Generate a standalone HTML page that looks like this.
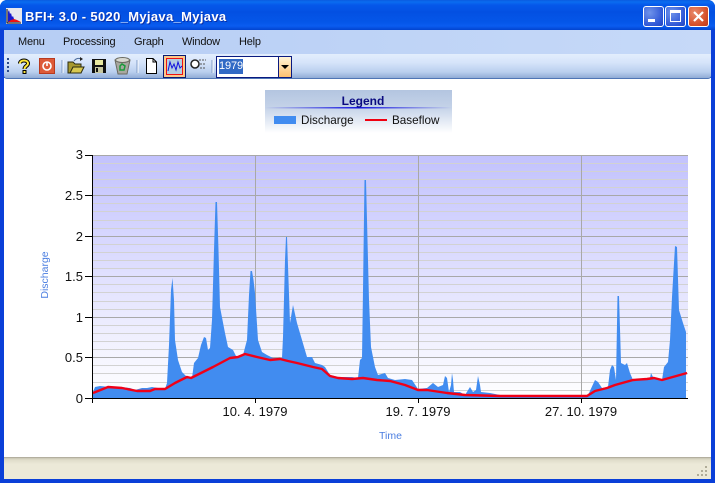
<!DOCTYPE html>
<html><head><meta charset="utf-8"><style>
html,body{margin:0;padding:0;background:#fff;width:715px;height:483px;overflow:hidden}
body{position:relative;font-family:"Liberation Sans",sans-serif}
.a{position:absolute}
.m{position:absolute;top:36px;font-size:11px;color:#111;letter-spacing:-.2px;line-height:13px}
.btn{position:absolute;top:6px;width:19px;height:19px;border:1px solid #fff;border-radius:3px;background:radial-gradient(circle at 30% 30%,#6f93ea,#2f57d6 70%,#2146c0)}
</style></head><body>
<div class="a" style="left:0;top:0;width:715px;height:483px;background:#0a3fd8;border-radius:7px 7px 0 0"></div>
<div class="a" style="left:0;top:0;width:715px;height:30px;border-radius:7px 7px 0 0;background:linear-gradient(#0a5be0 0,#0a6cf0 2px,#0558ea 5px,#0350e2 12px,#0456e8 22px,#0a5cf0 26px,#0244cf 30px)"></div>
<div class="a" style="left:4px;top:78px;width:707px;height:380px;background:#fff"></div>
<svg class="a" style="left:6px;top:8px" width="16" height="16" viewBox="0 0 16 16"><rect width="16" height="16" fill="#e8e8ee"/><path d="M1 1V15H15" stroke="#000" fill="none"/><path d="M2 14V4L3 2 4 6 5 5 6 9 7 8 8 11V14Z" fill="#1a1acc"/><path d="M2 14 5 12 8 11 11 12 15 14Z" fill="#f01010"/></svg>
<div class="a" style="left:25px;top:9px;font-size:13px;font-weight:bold;color:#fff;line-height:16px;white-space:nowrap;letter-spacing:.33px;text-shadow:1px 1px 0 #0a2fa8">BFI+ 3.0 - 5020_Myjava_Myjava</div>
<div class="btn" style="left:643px"><div class="a" style="left:4px;top:12px;width:7px;height:3px;background:#fff"></div></div>
<div class="btn" style="left:665px"><div class="a" style="left:4px;top:3px;width:9px;height:8px;border:1px solid #fff;border-top:3px solid #fff"></div></div>
<div class="btn" style="left:688px;background:radial-gradient(circle at 30% 30%,#e98a6c,#d5502a 65%,#c0391a)"><svg class="a" style="left:3px;top:3px" width="13" height="13"><path d="M2 2 11 11M11 2 2 11" stroke="#fff" stroke-width="2.2"/></svg></div>

<div class="a" style="left:4px;top:30px;width:707px;height:24px;background:linear-gradient(90deg,#b6cdf4,#c6d9f8)"></div>
<div class="m" style="left:18px">Menu</div><div class="m" style="left:63px">Processing</div><div class="m" style="left:134px">Graph</div><div class="m" style="left:182px">Window</div><div class="m" style="left:239px">Help</div>

<div class="a" style="left:4px;top:54px;width:707px;height:24px;background:linear-gradient(#e3eefd 0,#d6e4fa 35%,#b9cfee 75%,#91acd6 100%);border-radius:0 0 3px 3px;border-bottom:1px solid #4f75b5"></div>
<svg class="a" style="left:0;top:50px" width="300" height="32" viewBox="0 50 300 32">
<path d="M7 58h2v2h-2zM7 62h2v2h-2zM7 66h2v2h-2zM7 70h2v2h-2z" fill="#2a4a8a"/>
<path d="M62 60V73M137 60V73M212 60V73" stroke="#7f9cc9"/><path d="M63 60V73M138 60V73M213 60V73" stroke="#fff"/>
<!-- help -->
<path d="M20 63.500C20 59.500 28 59.500 28 63.500 28 66 24.500 66 24.500 69" fill="none" stroke="#000" stroke-width="4"/><path d="M20 63.500C20 59.500 28 59.500 28 63.500 28 66 24.500 66 24.500 69" fill="none" stroke="#ffe83a" stroke-width="2"/><rect x="22.500" y="70" width="4" height="4" fill="#000"/><rect x="23.500" y="71" width="2" height="2" fill="#ffe83a"/>
<!-- power -->
<rect x="39.500" y="58.500" width="15" height="15" fill="#dd5a38" stroke="#b83a20"/><circle cx="47" cy="66" r="4" fill="none" stroke="#fff" stroke-width="1.600"/><path d="M47 62V66" stroke="#fff" stroke-width="1.600"/>
<!-- folder -->
<path d="M68 62H73L75 64H81V73H68Z" fill="#a89a30" stroke="#2a2a10"/><path d="M70 73 73 67H84L81 73Z" fill="#d8c850" stroke="#2a2a10"/><path d="M74 61C76 58 79 58 81 59" stroke="#4a6a9a" fill="none"/><path d="M80 57l3 2-3 2z" fill="#222"/>
<!-- floppy -->
<rect x="92" y="59" width="14" height="14" fill="#111"/><rect x="95" y="60" width="8" height="5" fill="#e8e8a0"/><rect x="95" y="67" width="8" height="6" fill="#c8c8a0"/><rect x="96" y="68" width="2" height="4" fill="#111"/>
<!-- recycle -->
<path d="M115 60H130L127 74H118Z" fill="#a8a8a0" stroke="#6a6a60"/><ellipse cx="122.500" cy="60" rx="7" ry="2.500" fill="#d8d8d0" stroke="#6a6a60"/><path d="M120 66 122 64 125 66 124 70H120Z" fill="none" stroke="#1a9a3a" stroke-width="1.500"/>
<!-- new -->
<path d="M146.500 58.500H153L156.500 62V73.500H146.500Z" fill="#fff" stroke="#000"/><path d="M153 58.500V62H156.500" fill="none" stroke="#000"/>
<!-- active -->
<rect x="163.500" y="55.500" width="22" height="22" fill="#fdc88a" stroke="#0a1a70"/><rect x="166.500" y="58.500" width="16" height="16" fill="#b4cde0" stroke="#ee1010" stroke-width="1"/><path d="M168 71 170 62 172 68 174 64 176 70 178 62 180 68 182 66" fill="none" stroke="#1010dd"/>
<!-- options -->
<circle cx="195" cy="64" r="4" fill="#fff" stroke="#222" stroke-width="1.500"/><path d="M199 60H206M200 64H206M200 68H206" stroke="#555" stroke-dasharray="2 1"/>
</svg>
<div class="a" style="left:216px;top:56px;width:74px;height:20px;border:1px solid #0a1a80;background:#fff"></div>
<div class="a" style="left:219px;top:59px;width:24px;height:15px;background:#316ac5;color:#fff;font-size:11px;line-height:15px;text-align:center;letter-spacing:-.1px">1979</div>
<div class="a" style="left:278px;top:57px;width:12px;height:20px;border-left:1px solid #0a1a80;background:linear-gradient(#fff4d8,#fdc070)"></div>
<div class="a" style="left:281px;top:65px;width:0;height:0;border-left:4px solid transparent;border-right:4px solid transparent;border-top:4px solid #000"></div>

<div class="a" style="left:4px;top:457px;width:707px;height:22px;background:linear-gradient(#9e9a8a 0,#c8c5b4 1px,#e0ddca 3px,#ece9d8 7px,#ece9d8 100%)"></div>
<svg class="a" style="left:696px;top:465px" width="14" height="13"><path d="M9 1h2v2H9zM5 5h2v2H5zM9 5h2v2H9zM1 9h2v2H1zM5 9h2v2H5zM9 9h2v2H9z" fill="#b0ac98"/></svg>

<svg class="a" style="left:0;top:0" width="715" height="483">
<defs>
<linearGradient id="lg" x1="0" y1="0" x2="0" y2="1"><stop offset="0" stop-color="#b3c5e0"/><stop offset=".4" stop-color="#c4d2e8"/><stop offset="1" stop-color="#fff"/></linearGradient>
<linearGradient id="ll" x1="0" y1="0" x2="1" y2="0"><stop offset="0" stop-color="#2020e0" stop-opacity="0"/><stop offset=".5" stop-color="#1515e0"/><stop offset="1" stop-color="#2020e0" stop-opacity="0"/></linearGradient>
<linearGradient id="pg" x1="0" y1="0" x2="0" y2="1"><stop offset="0" stop-color="#c2c2fd"/><stop offset="1" stop-color="#ffffff"/></linearGradient>
</defs>
<rect x="265" y="90" width="187" height="43" fill="url(#lg)"/>
<rect x="265" y="107" width="187" height="1.500" fill="url(#ll)"/>
<text x="363" y="105" text-anchor="middle" font-size="12" font-weight="bold" fill="#0a0a80" font-family="Liberation Sans">Legend</text>
<rect x="274" y="116" width="22" height="8" fill="#418cf0"/>
<text x="301" y="124" font-size="11.700" fill="#111" font-family="Liberation Sans">Discharge</text>
<rect x="365" y="119" width="22" height="2" fill="#f00010"/>
<text x="392" y="124" font-size="11.700" fill="#111" font-family="Liberation Sans">Baseflow</text>

<rect x="93" y="155" width="595" height="243" fill="url(#pg)"/>
<g stroke="#d2d2d2" stroke-width="1">
<path d="M93 163.500H688M93 171.500H688M93 179.500H688M93 187.500H688M93 203.500H688M93 211.500H688M93 220.500H688M93 228.500H688M93 244.500H688M93 252.500H688M93 260.500H688M93 268.500H688M93 284.500H688M93 292.500H688M93 301.500H688M93 309.500H688M93 325.500H688M93 333.500H688M93 341.500H688M93 349.500H688M93 365.500H688M93 373.500H688M93 382.500H688M93 390.500H688"/>
</g>
<g stroke="#a8a8a8" stroke-width="1">
<path d="M93 155.500H688M93 195.500H688M93 236.500H688M93 276.500H688M93 317.500H688M93 357.500H688M255.500 155V398M418.500 155V398M581.500 155V398"/>
</g>
<path fill="#418cf0" d="M93 398V392L95 387 100 386 110 387 120 387 130 388 135 390 142 388 147 388 152 387 158 388 165 389 167 383 169 345 171 290 172.500 278 174 300 175 340 178 360 182 372 187 377 192 378 194 363 198 358 201 345 204 337 206 338 208 350 210 348 212 320 214 250 215.500 202 217 202 218.500 250 220 307 225 333 228 347 233 350 237 358 243 355 247 340 249 295 250.500 271 252 271 253.500 280 255 293 258 340 262 352 267 355 273 358 282 358 283 337 285 260 286 237 287 237 288.500 280 290 323 293 305 297 323 302 340 307 357 312 357 315 363 322 365 325 367 330 375 338 377 352 377 358 378 360 360 362 358 363 290 364.500 180 366 180 367.500 240 369 300 371 347 375 367 378 375 385 373 388 378 395 380 405 379 412 380 418 389 427 388 433 383 438 387 443 385 445 376 447 378 449 392 451 385 452 373 453 380 454 392 460 392 465 395 470 387 473 392 476 390 478 376 480 385 481 392 490 393 500 395 510 396 587 396 589 393 595 380 598 382 602 388 608 387 610 370 612 365 614 367 616 380 617.500 296 619 296 620.500 345 621 363 625 365 627 363 630 373 633 380 650 378 651 373 653 377 662 380 664 367 668 362 670 340 672 297 675 246 677 247 679 310 683 323 686 332V398Z"/>
<path fill="none" stroke="#f00018" stroke-width="2.400" stroke-linejoin="round" d="M93 393 108 387 122 388 137 391 150 391 155 389 165 389 175 383 187 377 191 378 203 372 213 367 230 358 238 357 245 354 257 357 270 360 280 359 288 361 297 363 313 367 322 369 330 376 338 378 352 379 363 378 377 380 390 381 405 385 418 390 427 390 447 393 465 395 500 396 587 396 595 391 607 388 615 385 633 380 647 379 654 378 662 380 687 373"/>
<g stroke="#000" stroke-width="1"><path d="M92.500 155V403M92 398.500H688M85 155.500H92M85 195.500H92M85 236.500H92M85 276.500H92M85 317.500H92M85 357.500H92M85 398.500H92M255.500 398V403M418.500 398V403M581.500 398V403"/></g>
<g font-size="13" fill="#111" font-family="Liberation Sans" text-anchor="end">
<text x="83" y="159">3</text><text x="83" y="200">2.5</text><text x="83" y="241">2</text><text x="83" y="281">1.5</text><text x="83" y="322">1</text><text x="83" y="362">0.5</text><text x="83" y="403">0</text></g>
<g font-size="13" fill="#111" font-family="Liberation Sans" text-anchor="middle">
<text x="255" y="416">10. 4. 1979</text><text x="418" y="416">19. 7. 1979</text><text x="581" y="416">27. 10. 1979</text></g>
<text x="390.500" y="439" font-size="10.500" fill="#4a7de0" text-anchor="middle" font-family="Liberation Sans">Time</text>
<text transform="translate(48 275) rotate(-90)" font-size="10.500" fill="#4a7de0" text-anchor="middle" font-family="Liberation Sans">Discharge</text>
</svg>
</body></html>
